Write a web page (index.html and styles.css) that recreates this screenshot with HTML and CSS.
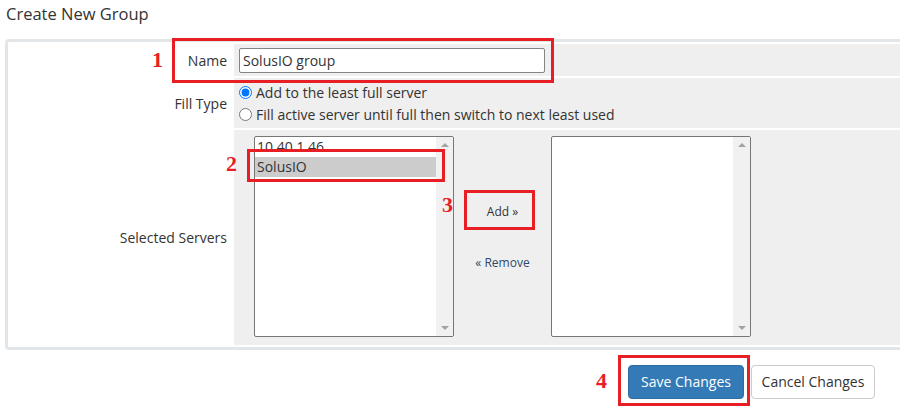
FILE: index.html
```html
<!DOCTYPE html>
<html>
<head>
<meta charset="utf-8">
<link rel="stylesheet" href="styles.css">
</head>
<body>
<div class="page">
  <h2 class="title">Create New Group</h2>
  <div class="panel">
    <div class="form-grid">
      <div class="label">Name</div>
      <div class="field field-name"><input class="text-input" type="text" value="SolusIO group"></div>

      <div class="label">Fill Type</div>
      <div class="field field-fill">
        <label class="radio-line"><input type="radio" name="fill" checked>Add to the least full server</label>
        <label class="radio-line"><input type="radio" name="fill">Fill active server until full then switch to next least used</label>
      </div>

      <div class="label">Selected Servers</div>
      <div class="field field-servers">
        <div class="listbox">
          <div class="options">
            <div class="option">10.40.1.46</div>
            <div class="option selected">SolusIO</div>
          </div>
          <div class="track"><span class="arrow up"></span><span class="arrow down"></span></div>
        </div>
        <div class="mover">
          <a class="move add">Add &raquo;</a>
          <a class="move remove">&laquo; Remove</a>
        </div>
        <div class="listbox">
          <div class="options"></div>
          <div class="track"><span class="arrow up"></span><span class="arrow down"></span></div>
        </div>
      </div>
    </div>
  </div>
  <div class="actions">
    <button class="btn btn-primary">Save Changes</button>
    <button class="btn btn-default">Cancel Changes</button>
  </div>

  <div class="mark box1"></div>
  <div class="mark box2"></div>
  <div class="mark box3"></div>
  <div class="mark box4"></div>
  <span class="num n1">1</span>
  <span class="num n2">2</span>
  <span class="num n3">3</span>
  <span class="num n4">4</span>
</div>
</body>
</html>
```

FILE: styles.css
```css
html, body {
  margin: 0;
  padding: 0;
  overflow: hidden;
  background: #fff;
}
.page {
  position: relative;
  width: 900px;
  height: 408px;
  overflow: hidden;
  font-family: "Open Sans", "Liberation Sans", sans-serif;
  color: #333;
}
.title {
  margin: 0;
  padding: 3px 6px 0;
  font-size: 16.5px;
  line-height: 22px;
  font-weight: 400;
  color: #333;
}
.panel {
  margin: 14px 0 0 5px;
  width: 1000px;
  border: 3px solid #e2e6e9;
  border-radius: 4px;
  padding: 2px;
  background: #fff;
}
.form-grid {
  display: grid;
  grid-template-columns: 222px 1fr;
  gap: 2px;
}
.label {
  display: flex;
  align-items: center;
  justify-content: flex-end;
  padding-right: 5px;
  font-size: 14px;
  color: #333;
  background: #fff;
}
.field {
  background: #efefef;
}
.field-name {
  padding: 4px 5px 3px;
}
.text-input {
  display: block;
  box-sizing: border-box;
  width: 306px;
  height: 25px;
  margin: 0;
  padding: 0 3px;
  border: 1px solid #858585;
  border-radius: 2px;
  font-family: "Open Sans", "Liberation Sans", sans-serif;
  font-size: 14px;
  color: #333;
  background: #fff;
  outline: none;
}
.field-fill {
  padding: 3px 0;
}
.radio-line {
  display: flex;
  align-items: center;
  height: 22px;
  font-size: 14px;
  color: #333;
}
.radio-line input {
  margin: 1px 4px 0 5px;
  width: 13px;
  height: 13px;
}
.field-servers {
  display: flex;
  align-items: stretch;
  padding: 6px 0 8px 20px;
}
.listbox {
  box-sizing: border-box;
  width: 200px;
  height: 201px;
  border: 1px solid #767676;
  border-radius: 2px;
  background: #fff;
  display: flex;
  overflow: hidden;
}
.options {
  flex: 1;
  font-size: 14px;
  line-height: 20px;
  color: #333;
}
.option {
  padding-left: 2px;
  height: 20px;
}
.option.selected {
  background: #cccccc;
}
.track {
  width: 17px;
  background: #f1f1f1;
  display: flex;
  flex-direction: column;
  justify-content: space-between;
  align-items: center;
  padding: 6px 0;
}
.arrow {
  width: 0;
  height: 0;
  border-left: 4px solid transparent;
  border-right: 4px solid transparent;
}
.arrow.up {
  border-bottom: 4px solid #a3a3a3;
}
.arrow.down {
  border-top: 4px solid #a3a3a3;
}
.mover {
  width: 97px;
  display: flex;
  flex-direction: column;
  align-items: center;
  justify-content: center;
  gap: 34px;
}
.move {
  font-size: 12px;
  line-height: 17px;
  color: #333;
  cursor: pointer;
}
.move.remove {
  color: #2f4a68;
}
.actions {
  display: flex;
  gap: 7px;
  margin-top: 15px;
  padding-left: 628px;
}
.btn {
  box-sizing: border-box;
  height: 34px;
  padding: 0;
  border-radius: 4px;
  font-family: "Open Sans", "Liberation Sans", sans-serif;
  font-size: 14px;
  line-height: 20px;
  cursor: pointer;
}
.btn-primary {
  width: 116px;
  background: #337ab7;
  border: 1px solid #2e6da4;
  color: #fff;
}
.btn-default {
  width: 124px;
  background: #fff;
  border: 1px solid #ccc;
  color: #333;
}
.mark {
  position: absolute;
  box-sizing: border-box;
  border: 3px solid #e81e25;
}
.box1 { left: 172px; top: 38px; width: 382px; height: 45px; }
.box2 { left: 247px; top: 149px; width: 198px; height: 33px; }
.box3 { left: 464px; top: 190px; width: 71px; height: 40px; }
.box4 { left: 618px; top: 355px; width: 132px; height: 51px; }
.num {
  position: absolute;
  font-family: "Liberation Serif", "Times New Roman", serif;
  font-weight: 700;
  font-size: 22px;
  line-height: 22px;
  color: #e81e25;
}
.n1 { left: 152px; top: 49px; }
.n2 { left: 226px; top: 153px; }
.n3 { left: 442px; top: 194px; }
.n4 { left: 596px; top: 370px; }
```
